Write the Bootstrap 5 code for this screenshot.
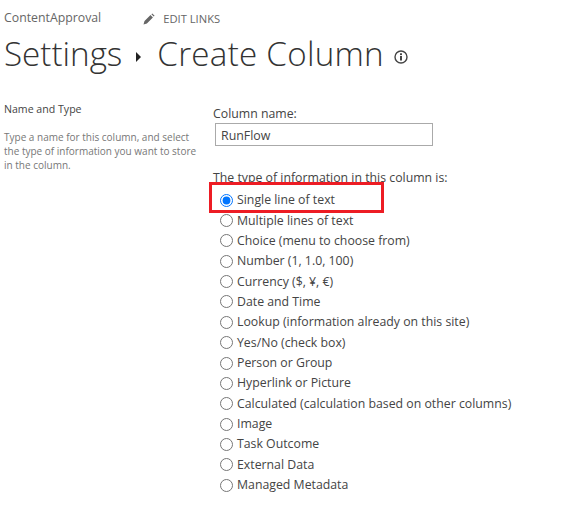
<!DOCTYPE html>
<html lang="en"><head><meta charset="utf-8"><title>Create Column</title>
<link href="https://cdn.jsdelivr.net/npm/bootstrap@5.3.0/dist/css/bootstrap.min.css" rel="stylesheet">
<style>
body{font-family:"Open Sans","Noto Sans",sans-serif;background:#fff;color:#444;overflow:hidden}
.top-bar{padding:8px 0 0 4px;height:28px;font-size:12.3px;line-height:18px;color:#666}
.edit-link{margin-left:42px;gap:8px;font-size:11.2px;padding-top:1px}
.page-head{padding-left:4px;height:63px;color:#333;font-weight:300;font-size:33.2px;line-height:48px;padding-bottom:12px}
.page-name{letter-spacing:.25px}
.crumb-arrow{width:0;height:0;border-left:5px solid #222;border-top:5px solid transparent;border-bottom:5px solid transparent;margin:6px 16px 0 14px}
.info-ico{margin:6px 0 0 10px}
.left-col{width:213px;padding:11px 0 0 4px;flex:none}
.sec-title{font-size:10.6px;line-height:14px;color:#444;margin-bottom:14px}
.sec-desc{font-size:10px;line-height:14px;color:#777}
.right-col{padding-top:14px}
.field-lab{font-size:12.3px;line-height:17px;color:#444;margin-bottom:1px}
.name-input{width:218px;height:23px;margin-left:2px;border:1px solid #aaa;border-radius:0;padding:1px 5px 0;font-size:12.4px;color:#444;box-shadow:none}
.type-lab{font-size:12.3px;line-height:17px;color:#444;margin-top:23px}
.type-list{position:relative;padding-left:7px;margin-top:4px}
.type-row{margin:0;padding:0;min-height:0;height:20.36px;gap:4px;font-size:12.3px;line-height:20px;color:#444}
.type-row .form-check-input{float:none;margin:0;width:13px;height:13px;flex:none;appearance:auto;-webkit-appearance:auto}
.type-row label{white-space:nowrap}
.hilite{position:absolute;left:-4px;top:-8px;width:175px;height:31px;border:3px solid #ed1c24;pointer-events:none}
</style></head>
<body>
<div class="top-bar d-flex align-items-center">
<span>ContentApproval</span>
<span class="edit-link d-flex align-items-center">
<svg width="12" height="12" viewBox="0 0 12 12" aria-hidden="true"><path d="M0.5 11.5l1-3.4 6-6 2.4 2.4-6 6z M8.4 1.3l.9-.9 2.3 2.3-.9.9z" fill="#666"/></svg>
<span>EDIT LINKS</span></span>
</div>
<div class="page-head d-flex align-items-center">
<span>Settings</span><span class="crumb-arrow"></span><span class="page-name">Create Column</span>
<svg class="info-ico" width="14" height="14" viewBox="0 0 14 14" aria-hidden="true"><circle cx="7" cy="7" r="6" fill="none" stroke="#444" stroke-width="1.4"/><rect x="6" y="6" width="2" height="4.5" fill="#444"/><rect x="6" y="3.3" width="2" height="1.8" fill="#444"/></svg>
</div>
<div class="d-flex">
<div class="left-col">
<div class="sec-title">Name and Type</div>
<div class="sec-desc">Type a name for this column, and select<br>the type of information you want to store<br>in the column.</div>
</div>
<div class="right-col">
<div class="field-lab">Column name:</div>
<input class="form-control name-input" type="text" value="RunFlow" aria-label="Column name">
<div class="type-lab">The type of information in this column is:</div>
<div class="type-list">
<div class="hilite"></div>
<div class="form-check type-row d-flex align-items-center"><input class="form-check-input" type="radio" name="t" id="t0" checked><label for="t0">Single line of text</label></div>
<div class="form-check type-row d-flex align-items-center"><input class="form-check-input" type="radio" name="t" id="t1"><label for="t1">Multiple lines of text</label></div>
<div class="form-check type-row d-flex align-items-center"><input class="form-check-input" type="radio" name="t" id="t2"><label for="t2">Choice (menu to choose from)</label></div>
<div class="form-check type-row d-flex align-items-center"><input class="form-check-input" type="radio" name="t" id="t3"><label for="t3">Number (1, 1.0, 100)</label></div>
<div class="form-check type-row d-flex align-items-center"><input class="form-check-input" type="radio" name="t" id="t4"><label for="t4">Currency ($, ¥, €)</label></div>
<div class="form-check type-row d-flex align-items-center"><input class="form-check-input" type="radio" name="t" id="t5"><label for="t5">Date and Time</label></div>
<div class="form-check type-row d-flex align-items-center"><input class="form-check-input" type="radio" name="t" id="t6"><label for="t6">Lookup (information already on this site)</label></div>
<div class="form-check type-row d-flex align-items-center"><input class="form-check-input" type="radio" name="t" id="t7"><label for="t7">Yes/No (check box)</label></div>
<div class="form-check type-row d-flex align-items-center"><input class="form-check-input" type="radio" name="t" id="t8"><label for="t8">Person or Group</label></div>
<div class="form-check type-row d-flex align-items-center"><input class="form-check-input" type="radio" name="t" id="t9"><label for="t9">Hyperlink or Picture</label></div>
<div class="form-check type-row d-flex align-items-center"><input class="form-check-input" type="radio" name="t" id="t10"><label for="t10">Calculated (calculation based on other columns)</label></div>
<div class="form-check type-row d-flex align-items-center"><input class="form-check-input" type="radio" name="t" id="t11"><label for="t11">Image</label></div>
<div class="form-check type-row d-flex align-items-center"><input class="form-check-input" type="radio" name="t" id="t12"><label for="t12">Task Outcome</label></div>
<div class="form-check type-row d-flex align-items-center"><input class="form-check-input" type="radio" name="t" id="t13"><label for="t13">External Data</label></div>
<div class="form-check type-row d-flex align-items-center"><input class="form-check-input" type="radio" name="t" id="t14"><label for="t14">Managed Metadata</label></div>
</div>
</div>
</div>
<script src="https://cdn.jsdelivr.net/npm/bootstrap@5.3.0/dist/js/bootstrap.bundle.min.js"></script>
</body></html>
